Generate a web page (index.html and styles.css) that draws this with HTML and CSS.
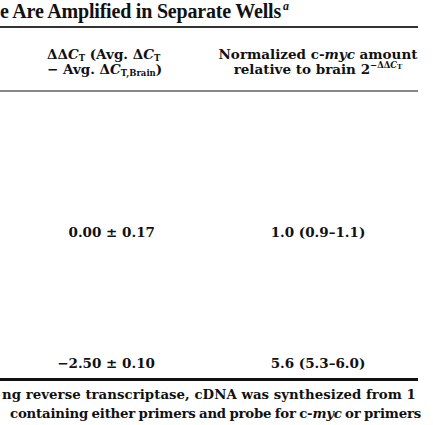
FILE: index.html
```html
<!DOCTYPE html>
<html>
<head>
<meta charset="utf-8">
<link rel="stylesheet" href="styles.css">
</head>
<body>
<div class="page">
  <h1 class="title">e Are Amplified in Separate Wells<sup class="note">a</sup></h1>
  <div class="table">
    <div class="row head">
      <div class="cell c1"></div>
      <div class="cell c2">ΔΔ<i>C</i><sub>T</sub> (Avg. Δ<i>C</i><sub>T</sub><br>− Avg. Δ<i>C</i><sub>T,Brain</sub>)</div>
      <div class="cell c3">Normalized c-<i>myc</i> amount<br>relative to brain 2<sup class="exp">−ΔΔ<i>C</i><sub>T</sub></sup></div>
    </div>
    <div class="row r1">
      <div class="cell c1"></div>
      <div class="cell c2 val">0.00 ± 0.17</div>
      <div class="cell c3">1.0 (0.9–1.1)</div>
    </div>
    <div class="row r2">
      <div class="cell c1"></div>
      <div class="cell c2 val">−2.50 ± 0.10</div>
      <div class="cell c3">5.6 (5.3–6.0)</div>
    </div>
  </div>
  <div class="foot">
    <div class="line l1">ng reverse transcriptase, cDNA was synthesized from 1</div>
    <div class="line l2">containing either primers and probe for c-<i>myc</i> or primers</div>
  </div>
</div>
</body>
</html>
```
FILE: styles.css
```css
html, body { margin: 0; padding: 0; background: #fff; }
body { font-family: "DejaVu Serif", "Liberation Serif", serif; color: #111; font-weight: bold; }
.page { width: 433px; height: 425px; overflow: hidden; }
.title { margin: 0; font-family: "Liberation Serif", serif; font-size: 20px; letter-spacing: -0.2px; line-height: 22px; height: 26px; font-weight: bold; white-space: nowrap; }
.title .note { font-size: 12px; font-style: italic; font-weight: bold; vertical-align: 8px; line-height: 0; margin-left: 2px; }
.table { width: 418px; border-top: 2px solid #333; border-bottom: 3px solid #111; }
.row { display: grid; grid-template-columns: 40px 178px 200px; }
.cell { font-size: 13.5px; line-height: 15px; white-space: nowrap; }
.head { padding: 19px 0 13px; border-bottom: 2px solid #888; }
.head .cell { line-height: 15px; }
.head .c2 { padding-left: 7px; }
sub { font-size: 8.5px; vertical-align: -2px; line-height: 0; }
.exp { font-size: 8.5px; vertical-align: 6px; line-height: 0; font-weight: bold; }
.exp sub { font-size: 7px; vertical-align: -1px; }
.val { text-align: right; padding-right: 63px; }
.r1 .cell, .r2 .cell { line-height: 17px; }
.r1 { padding-top: 132px; }
.r2 { padding-top: 114px; padding-bottom: 6px; }
.c3 { text-align: center; }
.foot { padding-top: 4px; font-size: 13.3px; line-height: 19px; white-space: nowrap; }
.l1 { padding-left: 2px; letter-spacing: 0.05px; }
.l2 { padding-left: 10px; letter-spacing: -0.2px; word-spacing: -1px; }
```
